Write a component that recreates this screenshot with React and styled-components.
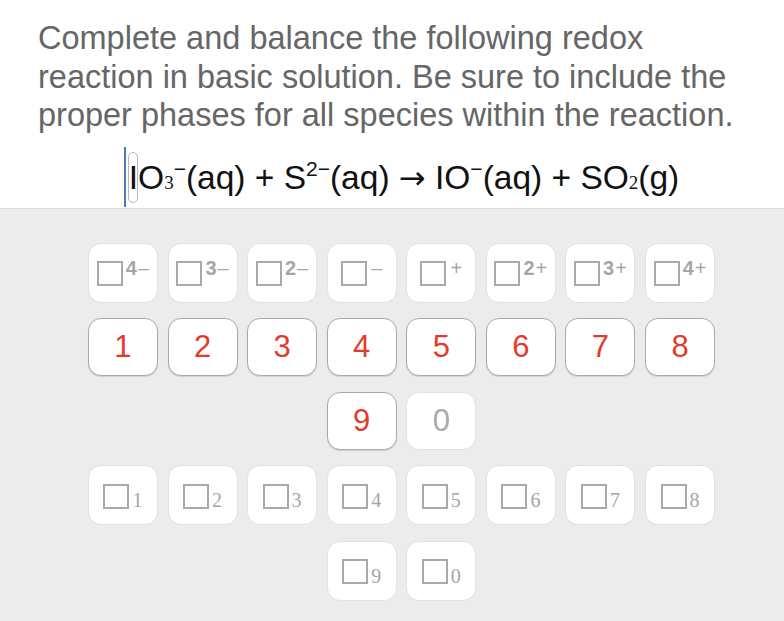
import React from "react";
import styled, { createGlobalStyle } from "styled-components";

const GlobalStyle = createGlobalStyle`
  html, body {
    margin: 0;
    padding: 0;
    background: #ffffff;
  }
  body {
    font-family: "Liberation Sans", Arial, sans-serif;
  }
`;

const charges = [
  { n: "4", s: "–" },
  { n: "3", s: "–" },
  { n: "2", s: "–" },
  { n: "", s: "–" },
  { n: "", s: "+" },
  { n: "2", s: "+" },
  { n: "3", s: "+" },
  { n: "4", s: "+" },
];

const App = () => {
  return (
    <Page>
      <GlobalStyle />
      <Prompt>
        Complete and balance the following redox reaction in basic solution. Be
        sure to include the proper phases for all species within the reaction.
      </Prompt>

      {/* equation with the caret at its start */}
      <EquationRow>
        <Equation>
          <Slot />
          IO<Sub>3</Sub>
          <Sup>−</Sup>(aq) + S<Sup>2−</Sup>(aq) <Arrow>→</Arrow> IO<Sup>−</Sup>(aq) + SO
          <Sub>2</Sub>(g)
        </Equation>
      </EquationRow>

      <Keypad>
        <Row>
          {charges.map((c, i) => (
            <KeyButton key={i}>
              <Box />
              <Charge>
                {c.n && <ChargeNum>{c.n}</ChargeNum>}
                <ChargeSign>{c.s}</ChargeSign>
              </Charge>
            </KeyButton>
          ))}
        </Row>

        <Row>
          {["1", "2", "3", "4", "5", "6", "7", "8"].map((d) => (
            <DigitButton key={d}>{d}</DigitButton>
          ))}
        </Row>

        <Row>
          <DigitButton>9</DigitButton>
          <DigitButton disabled>0</DigitButton>
        </Row>

        <Row>
          {["1", "2", "3", "4", "5", "6", "7", "8"].map((d) => (
            <KeyButton key={d}>
              <Box />
              <Index>{d}</Index>
            </KeyButton>
          ))}
        </Row>

        <Row>
          {["9", "0"].map((d) => (
            <KeyButton key={d}>
              <Box />
              <Index>{d}</Index>
            </KeyButton>
          ))}
        </Row>
      </Keypad>
    </Page>
  );
};

// Styled Components
const Page = styled.div`
  display: flex;
  flex-direction: column;
  min-height: 100vh;
`;

const Prompt = styled.p`
  margin: 0;
  padding: 19px 0 0 38px;
  width: 714px;
  font-size: 32.5px;
  line-height: 38.5px;
  color: #666666;
`;

const EquationRow = styled.div`
  display: flex;
  justify-content: center;
  padding: 12px 0 1px 19px;
`;

const Equation = styled.div`
  position: relative;
  display: flex;
  align-items: baseline;
  height: 60px;
  padding: 12px 0 0 3px;
  box-sizing: border-box;
  border-left: 2px solid #4a7cb3;
  font-size: 33.5px;
  color: #111111;
  white-space: pre;
`;

const Slot = styled.span`
  position: absolute;
  left: 2px;
  top: 5px;
  width: 8px;
  height: 49px;
  border: 1px solid #b8b8b8;
  border-radius: 5px;
`;

const Sub = styled.span`
  font-family: "Liberation Serif", "Times New Roman", serif;
  font-size: 19px;
`;

const Sup = styled.span`
  font-size: 21px;
  position: relative;
  top: -13px;
`;

const Arrow = styled.span`
  font-family: "DejaVu Sans", sans-serif;
  font-size: 32px;
`;

const Keypad = styled.div`
  flex: 1;
  display: flex;
  flex-direction: column;
  gap: 15.5px;
  padding: 34px 0 20px 19px;
  background: #ececec;
  border-top: 1px solid #dcdcdc;
`;

const Row = styled.div`
  display: flex;
  justify-content: center;
  gap: 9.6px;
`;

const KeyButton = styled.div`
  display: flex;
  align-items: center;
  justify-content: center;
  width: 70px;
  height: 60px;
  box-sizing: border-box;
  background: #ffffff;
  border: 1px solid #e2e2e2;
  border-radius: 13px;
`;

const DigitButton = styled.div`
  display: flex;
  align-items: center;
  justify-content: center;
  width: 70px;
  height: 58px;
  box-sizing: border-box;
  background: #ffffff;
  border: 1px solid ${(p) => (p.disabled ? "#e2e2e2" : "#aaaaaa")};
  box-shadow: ${(p) => (p.disabled ? "none" : "0 1px 1px rgba(0, 0, 0, 0.12)")};
  border-radius: 13px;
  font-size: 31px;
  color: ${(p) => (p.disabled ? "#aaaaaa" : "#e33b2b")};
`;

const Box = styled.div`
  width: 26px;
  height: 25px;
  box-sizing: border-box;
  border: 2px solid #a9a9a9;
  margin-top: 2px;
`;

const Charge = styled.div`
  display: flex;
  align-items: center;
  align-self: flex-start;
  margin: 15px 0 0 3px;
  height: 20px;
  color: #a6a6a6;
`;

const ChargeNum = styled.span`
  font-size: 20px;
  font-weight: bold;
`;

const ChargeSign = styled.span`
  font-size: 20px;
  font-weight: 300;
  margin-left: 1px;
`;

const Index = styled.span`
  align-self: flex-end;
  margin: 0 0 14px 3px;
  font-family: "Liberation Serif", "Times New Roman", serif;
  font-size: 20px;
  line-height: 20px;
  color: #a6a6a6;
`;

export default App;
